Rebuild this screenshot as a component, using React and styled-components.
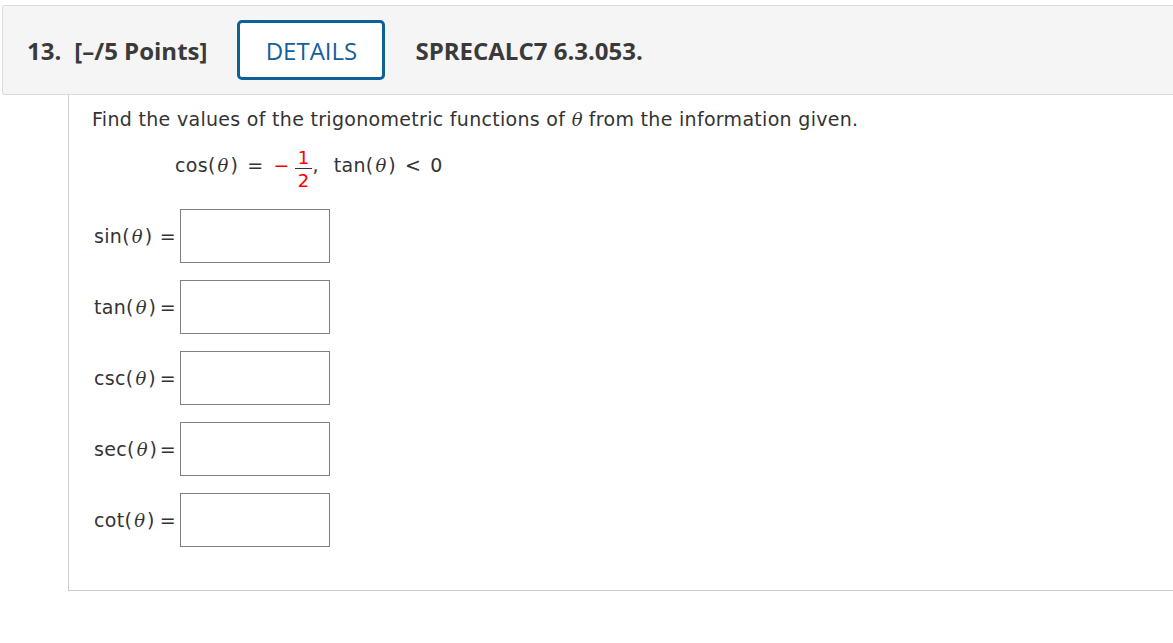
import React from "react";
import styled, { createGlobalStyle } from "styled-components";

const GlobalStyle = createGlobalStyle`
  html, body {
    margin: 0;
    padding: 0;
    background: #ffffff;
  }
  body {
    font-family: "DejaVu Sans", Verdana, sans-serif;
    color: #333333;
  }
`;

const Page = styled.div`
  padding: 5px 0 0 2px;
  overflow: hidden;
  width: 1171px;
  height: 638px;
`;

const Header = styled.div`
  display: flex;
  align-items: center;
  height: 88px;
  width: 1200px;
  padding-left: 24px;
  background: #f5f5f5;
  border: 1px solid #dcdcdc;
  border-radius: 2px;
  font-family: "Open Sans", sans-serif;
  font-size: 24px;
  font-weight: 700;
  color: #3a3a3a;
`;

const Number = styled.span`
  margin-right: 13px;
`;

const Points = styled.span`
  margin-right: 30px;
`;

const DetailsButton = styled.button`
  width: 148px;
  height: 60px;
  border: 3px solid #0e6196;
  border-radius: 5px;
  background: #ffffff;
  color: #13609a;
  font-family: "Open Sans", sans-serif;
  font-size: 24px;
  font-weight: 400;
  margin-right: 30px;
  padding: 0;
`;

const Panel = styled.div`
  margin-left: 66px;
  width: 1200px;
  border-left: 1px solid #cccccc;
  border-bottom: 1px solid #cccccc;
  padding: 11px 0 43px 23px;
  font-family: "DejaVu Sans", Verdana, sans-serif;
  font-size: 19px;
  letter-spacing: 0.3px;
`;

const Prompt = styled.p`
  margin: 0;
  line-height: 26px;
`;

const Given = styled.div`
  display: flex;
  align-items: center;
  margin: 12px 0 0 83px;
  height: 40px;
`;

const Theta = styled.i`
  font-family: "DejaVu Serif", serif;
  font-style: italic;
  font-size: 18px;
  letter-spacing: 0;
  padding: 0 ${(p) => p.$pad ?? 2}px;
`;

const Op = styled.span`
  margin: 0 ${(p) => p.$r ?? 9}px 0 ${(p) => p.$l ?? 9}px;
  color: ${(p) => p.$color || "inherit"};
`;

const Frac = styled.span`
  display: inline-flex;
  flex-direction: column;
  align-items: center;
  color: #ff0000;
  font-size: 18px;
  line-height: 17px;
  margin: 7px 0 0 5px;
  span:first-child {
    border-bottom: 1px solid #333;
    padding: 0 3px 2px;
  }
  span:last-child {
    padding-top: 3px;
  }
`;

const Comma = styled.span`
  margin-right: 15px;
`;

const Rows = styled.div`
  display: flex;
  flex-direction: column;
  gap: 17px;
  margin-top: 24px;
`;

const Row = styled.div`
  display: flex;
  align-items: center;
  padding-left: 2px;
`;

const Label = styled.span`
  display: flex;
  justify-content: space-between;
  width: 82px;
  margin-right: 4px;
  white-space: nowrap;
`;

const AnswerInput = styled.input`
  box-sizing: border-box;
  width: 150px;
  height: 54px;
  border: 1px solid #808080;
  background: #ffffff;
  margin: 0;
`;

const Fn = ({ name }) => (
  <span>
    {name}(<Theta>θ</Theta>)
  </span>
);

const rows = ["sin", "tan", "csc", "sec", "cot"];

export default function App() {
  return (
    <Page>
      <GlobalStyle />
      <Header>
        <Number>13.</Number>
        <Points>[–/5 Points]</Points>
        <DetailsButton>DETAILS</DetailsButton>
        <span>SPRECALC7 6.3.053.</span>
      </Header>
      <Panel>
        <Prompt>
          Find the values of the trigonometric functions of <Theta $pad={0}>θ</Theta> from the information given.
        </Prompt>
        <Given>
          <Fn name="cos" />
          <Op $r={6}>=</Op>
          <Op $l={4} $r={0} $color="#ff0000">−</Op>
          <Frac>
            <span>1</span>
            <span>2</span>
          </Frac>
          <Comma>,</Comma>
          <Fn name="tan" />
          <Op>&lt;</Op>0
        </Given>
        <Rows>
          {rows.map((r) => (
            <Row key={r}>
              <Label>
                <Fn name={r} />
                <span>=</span>
              </Label>
              <AnswerInput type="text" />
            </Row>
          ))}
        </Rows>
      </Panel>
    </Page>
  );
}
